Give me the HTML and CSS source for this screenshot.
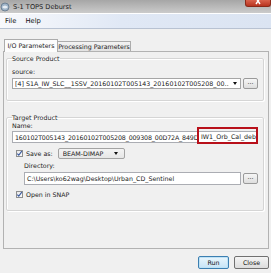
FILE: index.html
```html
<!DOCTYPE html>
<html lang="en">
<head>
    <meta charset="UTF-8">
    <title>S-1 TOPS Deburst</title>
    <link rel="stylesheet" href="styles.css">
</head>
<body>
    <div class="titlebar">
        <svg class="app-icon" width="10" height="10" viewBox="0 0 10 10">
            <circle cx="5" cy="5" r="4" fill="#9fb4c8" stroke="#5f7488" stroke-width="0.8"/>
            <path d="M2 5 Q5 2 8 5 Q5 8 2 5" fill="#e8eef4"/>
        </svg>
        <span class="title">S-1 TOPS Deburst</span>
        <span class="close-btn">
            <svg width="8" height="6" viewBox="0 0 8 6"><path d="M2 -2 L6 4 M6 -2 L2 4" stroke="#fff" stroke-width="1.4"/></svg>
        </span>
    </div>
    <div class="menubar">
        <span class="menu">File</span>
        <span class="menu">Help</span>
    </div>

    <div class="content">
        <div class="tabs">
            <div class="tab active">I/O Parameters</div>
            <div class="tab">Processing Parameters</div>
        </div>
        <div class="tabpanel">
            <fieldset class="group">
                <legend>Source Product</legend>
                <div class="label">source:</div>
                <div class="row">
                    <div class="combo source-combo">
                        <span class="combo-text">[4] S1A_IW_SLC__1SSV_20160102T005143_20160102T005208_00...</span>
                        <span class="arrow"></span>
                    </div>
                    <button class="browse">...</button>
                </div>
            </fieldset>

            <fieldset class="group target">
                <legend>Target Product</legend>
                <div class="label">Name:</div>
                <div class="field name-field">
                    <div class="name-clip">
                        <span class="name-text">160102T005143_20160102T005208_009308_00D72A_849D</span>
                    </div>
                    <span class="highlight">IW1_Orb_Cal_deb</span>
                </div>
                <div class="save-row">
                    <span class="checkbox">
                        <svg width="7" height="7" viewBox="0 0 7 7"><path d="M1.3 3.6 L2.8 5.2 L5.8 1.2" fill="none" stroke="#3a5aa0" stroke-width="1.1"/></svg>
                    </span>
                    <span class="check-label">Save as:</span>
                    <div class="combo format-combo">
                        <span class="combo-text">BEAM-DIMAP</span>
                        <span class="arrow"></span>
                    </div>
                </div>
                <div class="label indent">Directory:</div>
                <div class="row indent">
                    <div class="field dir-field">C:\Users\ko62wag\Desktop\Urban_CD_Sentinel</div>
                    <button class="browse">...</button>
                </div>
                <div class="snap-row">
                    <span class="checkbox">
                        <svg width="7" height="7" viewBox="0 0 7 7"><path d="M1.3 3.6 L2.8 5.2 L5.8 1.2" fill="none" stroke="#3a5aa0" stroke-width="1.1"/></svg>
                    </span>
                    <span class="check-label">Open in SNAP</span>
                </div>
            </fieldset>
        </div>

        <div class="buttons">
            <button class="btn default">Run</button>
            <button class="btn">Close</button>
        </div>
    </div>
</body>
</html>
```

FILE: styles.css
```css
* {
    box-sizing: border-box;
}
body {
    margin: 0;
    width: 271px;
    height: 273px;
    overflow: hidden;
    background-color: #f0f0f0;
    font-family: "DejaVu Sans", sans-serif;
    font-size: 6.3px;
    color: #1a1a1a;
}
.titlebar {
    height: 13px;
    display: flex;
    align-items: center;
    background: linear-gradient(to bottom, #a6a6a6, #cbcbcb);
}
.app-icon {
    flex-shrink: 0;
}
.title {
    margin-left: 3px;
    font-size: 6.6px;
    color: #222;
}
.close-btn {
    margin-left: auto;
    align-self: flex-start;
    width: 26px;
    height: 7px;
    background: linear-gradient(to bottom, #d9624c, #b8341f);
    border: 1px solid #8a2a1a;
    border-top: none;
    border-radius: 0 0 3px 3px;
    display: flex;
    justify-content: center;
    overflow: hidden;
}
.menubar {
    height: 16px;
    display: flex;
    align-items: center;
    gap: 9px;
    padding-left: 5px;
    background: linear-gradient(to right, #f8f9fc, #e0e8f5 45%, #dbe4f2);
    border-top: 1px solid #fff;
    border-bottom: 1px solid #b8c2d2;
}
.menu {
    font-size: 6.8px;
    color: #111;
}
.content {
    padding: 10px 2px 0 3px;
}
.tabs {
    display: flex;
    align-items: flex-end;
    height: 12px;
    padding-left: 1px;
}
.tab {
    height: 10px;
    width: 73px;
    line-height: 9px;
    text-align: center;
    background: linear-gradient(to bottom, #f3f3f3, #e2e2e2);
    border: 1px solid #acacac;
    border-left: none;
    border-bottom: none;
}
.tab.active {
    position: relative;
    z-index: 1;
    width: 54px;
    height: 13px;
    margin-bottom: -1px;
    line-height: 11px;
    background: #fcfcfc;
    border-left: 1px solid #acacac;
}
.tabpanel {
    width: 266px;
    height: 198px;
    border: 1px solid #b2b2b2;
    background-color: #f0f0f0;
    padding-top: 2px;
}
.group {
    min-width: 0;
    margin: 0 4px 0 2px;
    padding: 0 5px 11px 5px;
    border: 1px solid #d5d5d5;
    border-radius: 2px;
    box-shadow: inset 1px 1px 0 #fff, 1px 1px 0 #fff;
}
.group legend {
    padding: 0;
    line-height: 9px;
    color: #222;
}
.group.target {
    margin-top: 12px;
}
.label {
    line-height: 8px;
    margin-top: 5px;
}
.target .label {
    margin-top: 0;
}
.row {
    display: flex;
    align-items: center;
    gap: 2px;
    margin-top: 2px;
}
.indent {
    margin-left: 12px;
}
.combo {
    height: 11px;
    display: flex;
    align-items: center;
    background: #fff;
    border: 1px solid #a6a6a6;
    padding: 0 3px 0 2px;
    white-space: nowrap;
    overflow: hidden;
}
.source-combo {
    flex: 1;
    min-width: 0;
}
.combo-text {
    flex: 1;
    min-width: 0;
    line-height: 9px;
    overflow: hidden;
}
.arrow {
    flex-shrink: 0;
    width: 0;
    height: 0;
    border-left: 2.5px solid transparent;
    border-right: 2.5px solid transparent;
    border-top: 3px solid #111;
    margin-left: 4px;
}
.browse {
    flex-shrink: 0;
    width: 15px;
    height: 11px;
    padding: 0 0 3px 0;
    font-family: inherit;
    font-size: 6.3px;
    line-height: 6px;
    background: linear-gradient(to bottom, #f6f6f6, #dedede);
    border: 1px solid #9a9a9a;
    border-radius: 2px;
    color: #111;
}
.field {
    height: 12px;
    display: flex;
    align-items: center;
    background: #fff;
    border: 1px solid #abadb3;
    padding: 0 2px;
    white-space: nowrap;
    overflow: hidden;
}
.name-field {
    margin-top: 1px;
    overflow: visible;
    padding-right: 0;
}
.name-clip {
    flex: 1;
    min-width: 0;
    display: flex;
    overflow: hidden;
    line-height: 9px;
}
.name-text {
    flex-shrink: 0;
    letter-spacing: -0.15px;
}
.highlight {
    flex-shrink: 0;
    align-self: flex-end;
    width: 61px;
    height: 17px;
    margin-bottom: -2px;
    margin-right: -1px;
    display: flex;
    align-items: flex-end;
    padding: 0 0 1px 2px;
    line-height: 9px;
    border: 2px solid #b8101a;
    white-space: nowrap;
    overflow: hidden;
}
.save-row {
    display: flex;
    align-items: center;
    height: 11px;
    margin-top: 5px;
    padding-left: 4px;
}
.checkbox {
    width: 7px;
    height: 7px;
    display: inline-flex;
    border: 1px solid #8e8f8f;
    background: linear-gradient(135deg, #e8e8e8, #fafafa);
    flex-shrink: 0;
}
.checkbox svg {
    margin: -1px;
}
.check-label {
    margin-left: 3px;
}
.format-combo {
    width: 67px;
    margin-left: 5px;
    background: linear-gradient(to bottom, #f4f4f4, #e6e6e6);
    border-color: #a3a3a3;
    border-radius: 2px;
    padding-left: 4px;
    padding-right: 6px;
}
.target .label.indent {
    margin-top: 3px;
}
.dir-field {
    flex: 1;
    min-width: 0;
    height: 13px;
    line-height: 9px;
}
.snap-row {
    display: flex;
    align-items: center;
    margin-top: 5px;
    padding-left: 4px;
    height: 9px;
}
.buttons {
    display: flex;
    justify-content: flex-end;
    gap: 5px;
    margin-top: 7px;
}
.btn {
    height: 13px;
    width: 35px;
    padding: 0;
    font-family: inherit;
    font-size: 6.3px;
    color: #111;
    background: linear-gradient(to bottom, #f4f4f4, #dcdcdc);
    border: 1px solid #707070;
    border-radius: 2px;
}
.btn.default {
    width: 31px;
    border-color: #3c7fb1;
    background: linear-gradient(to bottom, #eaf6fd, #c6e4f6);
    box-shadow: inset 0 0 0 1px #bfe2f6;
}
```
